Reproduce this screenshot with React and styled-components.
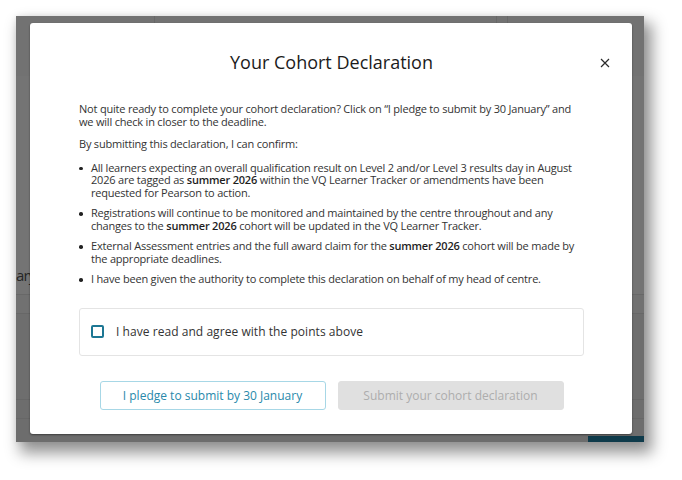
import React from "react";
import styled, { createGlobalStyle } from "styled-components";

const Global = createGlobalStyle`
  html, body { margin: 0; padding: 0; background: #ffffff; }
  body { font-family: "Open Sans", "Noto Sans", sans-serif; color: #333; }
  * { box-sizing: border-box; }
`;

const Stage = styled.div`
  width: 682px;
  height: 480px;
  padding: 16px 38px 38px 16px;
  background: #fff;
`;

const Frame = styled.div`
  position: relative;
  width: 628px;
  height: 426px;
  overflow: hidden;
  background: #6f6f6f;
  box-shadow: 6px 9px 14px 2px rgba(0, 0, 0, 0.42), 0 0 6px rgba(0, 0, 0, 0.08);
`;

/* dimmed page behind the overlay */
const Page = styled.div`
  display: flex;
  flex-direction: column;
  height: 100%;
`;

const TopBand = styled.div`
  height: 60px;
  display: grid;
  grid-template-columns: 139px 342px 11px 1fr;
  background: #727272;
`;

const Cell = styled.div`
  border-right: 1px solid ${(p) => (p.$line ? "#686868" : "transparent")};
`;

const Spacer = styled.div`
  height: ${(p) => p.$h}px;
  background: ${(p) => p.$bg || "#737373"};
  border-bottom: 1px solid ${(p) => (p.$line ? "#676767" : "transparent")};
`;

const HeadingRow = styled.div`
  height: 219px;
  display: flex;
  align-items: flex-end;
  padding-bottom: 8px;
  background: #747474;
  border-bottom: 1px solid #686868;
`;

const BgHeading = styled.div`
  font-family: "Open Sans", sans-serif;
  font-size: 15px;
  line-height: 22px;
  color: #262626;
  letter-spacing: -0.8px;
`;

const BottomRow = styled.div`
  flex: 1;
  display: flex;
  justify-content: flex-end;
  align-items: flex-end;
  background: #6d6d6d;
`;

const TealBtn = styled.div`
  width: 56px;
  height: 6px;
  background: #0f3b4b;
`;

/* modal dialog, lies over the page */
const Modal = styled.div`
  position: absolute;
  left: 14px;
  top: 7px;
  width: 602px;
  height: 411px;
  background: #fff;
  border-radius: 3px;
  box-shadow: 0 1px 2px rgba(0, 0, 0, 0.45);
  padding: 26px 48px 24px 49px;
  display: flex;
  flex-direction: column;
`;

const Header = styled.div`
  position: relative;
  display: flex;
  justify-content: center;
  align-items: center;
  height: 26px;
`;

const Title = styled.h2`
  margin: 0;
  font-size: 18px;
  font-weight: 500;
  color: #1b1b1b;
`;

const Close = styled.button`
  position: absolute;
  right: -26px;
  top: 9px;
  width: 10px;
  height: 10px;
  padding: 0;
  border: 0;
  background: none;
  display: flex;
  cursor: pointer;
`;

const Body = styled.div`
  margin-top: 29px;
  font-size: 11px;
  line-height: 12.5px;
  color: #333;
  letter-spacing: -0.2px;
`;

const Para = styled.p`
  margin: 0 0 ${(p) => p.$mb}px 0;
`;

const List = styled.ul`
  list-style: none;
  margin: 0;
  padding: 0;
  display: flex;
  flex-direction: column;
  gap: 8px;
`;

const Item = styled.li`
  display: grid;
  grid-template-columns: 12px 1fr;
`;

const Dot = styled.span`
  width: 3.5px;
  height: 3.5px;
  border-radius: 50%;
  background: #222;
  margin-top: 5px;
`;

const Strong = styled.strong`
  font-weight: 600;
  color: #1e1e1e;
`;

const AgreeBox = styled.label`
  margin-top: 22px;
  height: 49px;
  border: 1px solid #e4e4e4;
  border-radius: 3px;
  display: flex;
  align-items: center;
  padding-left: 11px;
  gap: 12px;
  cursor: pointer;
`;

const Check = styled.span`
  width: 13px;
  height: 13px;
  border: 2px solid #1d7794;
  border-radius: 2px;
  flex: none;
`;

const AgreeText = styled.span`
  font-size: 12px;
  color: #333;
  letter-spacing: 0.05px;
`;

const Actions = styled.div`
  margin-top: 25px;
  display: flex;
  justify-content: center;
  gap: 12px;
`;

const Button = styled.button`
  width: 226px;
  height: 29px;
  padding: 0;
  border-radius: 3px;
  font-family: "Open Sans", sans-serif;
  font-size: 12px;
  border: 1px solid ${(p) => (p.$primary ? "#a7d7e6" : "#e0e0e0")};
  background: ${(p) => (p.$primary ? "#fff" : "#e0e0e0")};
  color: ${(p) => (p.$primary ? "#2889ab" : "#adadad")};
  cursor: ${(p) => (p.$primary ? "pointer" : "default")};
`;

export default function App() {
  return (
    <>
      <Global />
      <Stage>
        <Frame>
          <Page>
            <TopBand>
              <Cell $line />
              <Cell $line />
              <Cell $line />
              <Cell />
            </TopBand>
            <HeadingRow>
              <BgHeading>ary</BgHeading>
            </HeadingRow>
            <Spacer $h={19} $bg="#717171" $line />
            <Spacer $h={86} $bg="#6e6e6e" $line />
            <Spacer $h={19} $bg="#6d6d6d" $line />
            <BottomRow>
              <TealBtn />
            </BottomRow>
          </Page>

          <Modal role="dialog" aria-label="Your Cohort Declaration">
            <Header>
              <Title>Your Cohort Declaration</Title>
              <Close aria-label="Close">
                <svg width="10" height="10" viewBox="0 0 10 10">
                  <path d="M1 1 L9 9 M9 1 L1 9" stroke="#2a2a2a" strokeWidth="1.2" fill="none" />
                </svg>
              </Close>
            </Header>
            <Body>
              <Para $mb={10}>
                Not quite ready to complete your cohort declaration? Click on “I pledge to submit by 30 January” and
                we will check in closer to the deadline.
              </Para>
              <Para $mb={11}>By submitting this declaration, I can confirm:</Para>
              <List>
                <Item>
                  <Dot />
                  <span>
                    All learners expecting an overall qualification result on Level 2 and/or Level 3 results day in August
                    2026 are tagged as <Strong>summer 2026</Strong> within the VQ Learner Tracker or amendments have been
                    requested for Pearson to action.
                  </span>
                </Item>
                <Item>
                  <Dot />
                  <span>
                    Registrations will continue to be monitored and maintained by the centre throughout and any changes to
                    the <Strong>summer 2026</Strong> cohort will be updated in the VQ Learner Tracker.
                  </span>
                </Item>
                <Item>
                  <Dot />
                  <span>
                    External Assessment entries and the full award claim for the <Strong>summer 2026</Strong> cohort will be
                    made by the appropriate deadlines.
                  </span>
                </Item>
                <Item>
                  <Dot />
                  <span>I have been given the authority to complete this declaration on behalf of my head of centre.</span>
                </Item>
              </List>
            </Body>
            <AgreeBox>
              <Check />
              <AgreeText>I have read and agree with the points above</AgreeText>
            </AgreeBox>
            <Actions>
              <Button $primary>I pledge to submit by 30 January</Button>
              <Button disabled>Submit your cohort declaration</Button>
            </Actions>
          </Modal>
        </Frame>
      </Stage>
    </>
  );
}
